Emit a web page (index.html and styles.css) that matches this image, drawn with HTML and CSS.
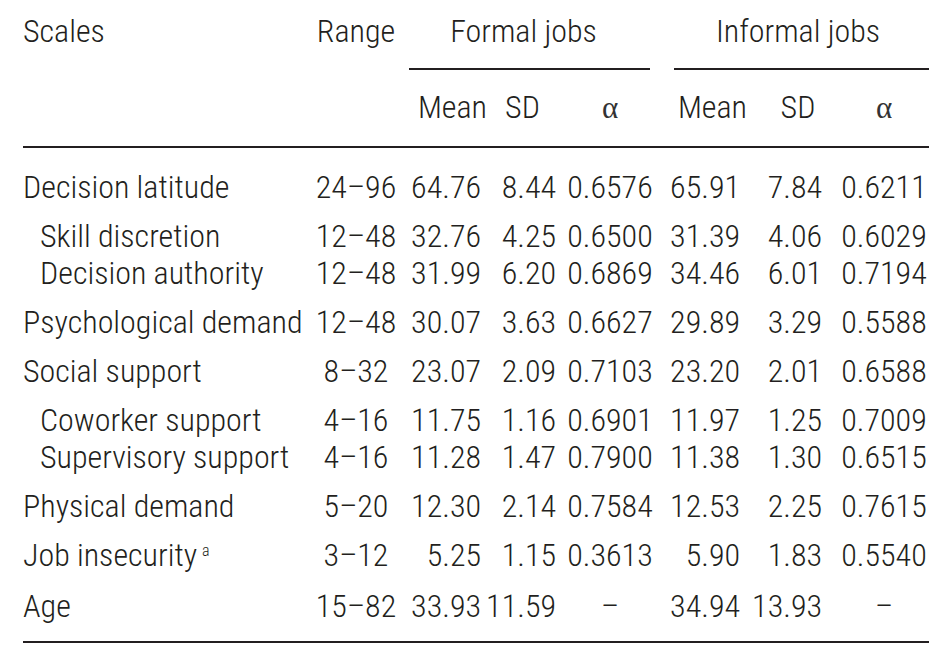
FILE: index.html
```html
<!DOCTYPE html>
<html lang="en">
<head>
<meta charset="utf-8">
<title>Scales table</title>
<link rel="stylesheet" href="styles.css">
</head>
<body>
<div class="table">
  <div class="head">
    <div class="row head1">
      <div class="c label">Scales</div>
      <div class="c range">Range</div>
      <div class="span formal"><div class="spanline">Formal jobs</div></div>
      <div class="span informal"><div class="spanline">Informal jobs</div></div>
    </div>
    <div class="row head2">
      <div class="c label"></div>
      <div class="c range"></div>
      <div class="c fmean hmean">Mean</div>
      <div class="c fsd hsd">SD</div>
      <div class="c falpha alpha">α</div>
      <div class="c imean hmean">Mean</div>
      <div class="c isd hsd">SD</div>
      <div class="c ialpha alpha">α</div>
    </div>
  </div>
  <div class="body">
    <div class="group">
      <div class="row"><div class="c label">Decision latitude</div><div class="c range">24–96</div><div class="c fmean">64.76</div><div class="c fsd">8.44</div><div class="c falpha">0.6576</div><div class="c imean">65.91</div><div class="c isd">7.84</div><div class="c ialpha">0.6211</div></div>
    </div>
    <div class="group">
      <div class="row"><div class="c label sub">Skill discretion</div><div class="c range">12–48</div><div class="c fmean">32.76</div><div class="c fsd">4.25</div><div class="c falpha">0.6500</div><div class="c imean">31.39</div><div class="c isd">4.06</div><div class="c ialpha">0.6029</div></div>
      <div class="row"><div class="c label sub">Decision authority</div><div class="c range">12–48</div><div class="c fmean">31.99</div><div class="c fsd">6.20</div><div class="c falpha">0.6869</div><div class="c imean">34.46</div><div class="c isd">6.01</div><div class="c ialpha">0.7194</div></div>
    </div>
    <div class="group">
      <div class="row"><div class="c label">Psychological demand</div><div class="c range">12–48</div><div class="c fmean">30.07</div><div class="c fsd">3.63</div><div class="c falpha">0.6627</div><div class="c imean">29.89</div><div class="c isd">3.29</div><div class="c ialpha">0.5588</div></div>
    </div>
    <div class="group">
      <div class="row"><div class="c label">Social support</div><div class="c range">8–32</div><div class="c fmean">23.07</div><div class="c fsd">2.09</div><div class="c falpha">0.7103</div><div class="c imean">23.20</div><div class="c isd">2.01</div><div class="c ialpha">0.6588</div></div>
    </div>
    <div class="group">
      <div class="row"><div class="c label sub">Coworker support</div><div class="c range">4–16</div><div class="c fmean">11.75</div><div class="c fsd">1.16</div><div class="c falpha">0.6901</div><div class="c imean">11.97</div><div class="c isd">1.25</div><div class="c ialpha">0.7009</div></div>
      <div class="row"><div class="c label sub">Supervisory support</div><div class="c range">4–16</div><div class="c fmean">11.28</div><div class="c fsd">1.47</div><div class="c falpha">0.7900</div><div class="c imean">11.38</div><div class="c isd">1.30</div><div class="c ialpha">0.6515</div></div>
    </div>
    <div class="group">
      <div class="row"><div class="c label">Physical demand</div><div class="c range">5–20</div><div class="c fmean">12.30</div><div class="c fsd">2.14</div><div class="c falpha">0.7584</div><div class="c imean">12.53</div><div class="c isd">2.25</div><div class="c ialpha">0.7615</div></div>
    </div>
    <div class="group">
      <div class="row"><div class="c label">Job insecurity<sup class="note">a</sup></div><div class="c range">3–12</div><div class="c fmean">5.25</div><div class="c fsd">1.15</div><div class="c falpha">0.3613</div><div class="c imean">5.90</div><div class="c isd">1.83</div><div class="c ialpha">0.5540</div></div>
    </div>
    <div class="group last">
      <div class="row"><div class="c label">Age</div><div class="c range">15–82</div><div class="c fmean">33.93</div><div class="c fsd">11.59</div><div class="c falpha">–</div><div class="c imean">34.94</div><div class="c isd">13.93</div><div class="c ialpha">–</div></div>
    </div>
  </div>
</div>
</body>
</html>
```

FILE: styles.css
```css
html, body {
  margin: 0;
  padding: 0;
  background: #ffffff;
}
body {
  font-family: "Roboto Condensed", "Roboto", "Liberation Sans", sans-serif;
  font-stretch: condensed;
  font-weight: 350;
  font-size: 32px;
  color: #231f20;
}
.table {
  width: 906px;
  margin-left: 23px;
}
.row {
  display: grid;
  grid-template-columns: 287px 92px 83px 77px 96px 92px 86px 93px;
  line-height: 37px;
}
.c {
  white-space: nowrap;
}
.label { text-align: left; }
.sub { padding-left: 17px; }
.range { text-align: center; }
.fmean { text-align: right; padding-right: 4px; }
.fsd { text-align: right; padding-right: 6px; }
.falpha { text-align: center; }
.imean { text-align: right; padding-right: 10px; }
.isd { text-align: right; padding-right: 14px; }
.ialpha { text-align: center; padding-left: 3px; }

.head1 {
  padding-top: 13px;
  height: 70px;
  box-sizing: border-box;
  align-items: start;
}
.span {
  height: 57px;
  box-sizing: border-box;
  text-align: center;
}
.formal { grid-column: 3 / span 3; padding: 0 8px 0 7px; }
.informal { grid-column: 6 / span 3; padding: 0 0 0 16px; }
.spanline {
  height: 57px;
  box-sizing: border-box;
  border-bottom: 2px solid #231f20;
}
.formal .spanline { padding-right: 12px; }
.informal .spanline { padding-right: 7px; }
.head2 {
  padding: 19px 0 20px;
  border-bottom: 2px solid #231f20;
}
.hmean { padding-right: 0; }
.fmean.hmean { margin-right: -2px; }
.imean.hmean { padding-right: 3px; }
.hsd { text-align: center; padding-right: 0; }
.fsd.hsd { padding-right: 2px; }
.isd.hsd { padding-right: 0; padding-left: 10px; }
.alpha {
  font-family: "Liberation Serif", serif;
  font-weight: 400;
  font-size: 31px;
  color: #333;
}
.body {
  padding: 15px 0 10px;
  border-bottom: 2px solid #231f20;
}
.group {
  padding: 6px 0;
}
.group.last {
  padding-top: 8px;
}
.note {
  font-size: 16px;
  line-height: 0;
  vertical-align: 10px;
  margin-left: 5px;
}
```
